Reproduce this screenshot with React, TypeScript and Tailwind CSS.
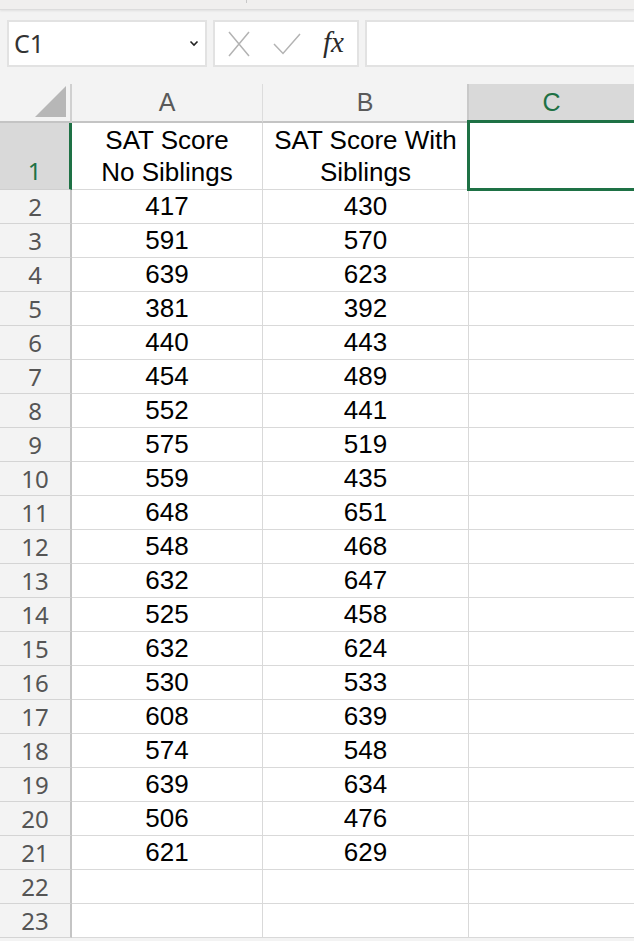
import React from "react";

const data: [string, string][] = [
  ["417", "430"],
  ["591", "570"],
  ["639", "623"],
  ["381", "392"],
  ["440", "443"],
  ["454", "489"],
  ["552", "441"],
  ["575", "519"],
  ["559", "435"],
  ["648", "651"],
  ["548", "468"],
  ["632", "647"],
  ["525", "458"],
  ["632", "624"],
  ["530", "533"],
  ["608", "639"],
  ["574", "548"],
  ["639", "634"],
  ["506", "476"],
  ["621", "629"],
  ["", ""],
  ["", ""],
];

const cellFont = { fontFamily: '"Liberation Sans", Arial, sans-serif' };
const uiFont = { fontFamily: '"Noto Sans", "Open Sans", sans-serif' };

export default function App() {
  return (
    <div className="w-[634px] h-[941px] overflow-hidden bg-[#f3f3f3] flex flex-col">
      {/* top strip */}
      <div className="h-[10px] bg-[#f0efee] border-b border-[#dcdcdc] shadow-[0_1px_2px_rgba(0,0,0,0.08)] flex justify-center">
        <div className="w-px h-[3px] bg-[#c8c8c8] ml-[-142px]" />
      </div>
      {/* formula bar */}
      <div className="h-[74px] flex items-start pt-[10px] pl-[7px] gap-[6px]">
        <div className="w-[200px] h-[47px] bg-white border-2 border-[#e2e2e2] flex items-center pl-[5px] pr-[5px]">
          <span className="text-[25px] text-[#333] flex-1 leading-none" style={uiFont}>
            C1
          </span>
          <svg width="10" height="7" viewBox="0 0 10 7" className="mr-[1px]">
            <path d="M1.5 1.5 L5 5 L8.5 1.5" stroke="#222" strokeWidth="1.6" fill="none" />
          </svg>
        </div>
        <div className="w-[146px] h-[47px] bg-white border-2 border-[#e2e2e2] flex items-center pl-[13px]">
          <svg width="22" height="26" viewBox="0 0 22 26">
            <path d="M1 1 L21 25 M21 1 L1 25" stroke="#b3b3b3" strokeWidth="1.5" fill="none" />
          </svg>
          <svg width="28" height="22" viewBox="0 0 28 22" className="ml-[23px]">
            <path d="M1 11 L10 20.5 L27 1" stroke="#b3b3b3" strokeWidth="1.5" fill="none" />
          </svg>
          <span
            className="ml-[22px] text-[29px] italic text-[#2a2a2a] leading-none mt-[-2px]"
            style={{ fontFamily: '"Liberation Serif", "Times New Roman", serif' }}
          >
            fx
          </span>
        </div>
        <div className="flex-1 h-[47px] bg-white border-2 border-r-0 border-[#e2e2e2]" />
      </div>
      {/* sheet */}
      <div className="grid grid-cols-[72px_191px_206px_1fr] grid-rows-[39px_67px_repeat(22,34px)]">
        {/* header row */}
        <div className="bg-[#f3f3f3] border-r-2 border-r-[#d0d0d0] border-b-2 border-b-[#c4c4c4] flex items-end justify-end pr-[4px] pb-[4px]">
          <svg width="31" height="31" viewBox="0 0 31 31">
            <path d="M31 0 L31 31 L0 31 Z" fill="#b7b7b7" />
          </svg>
        </div>
        <div
          className="bg-[#f3f3f3] border-r border-r-[#dcdcdc] border-b-2 border-b-[#c4c4c4] flex items-center justify-center text-[25px] text-[#5a5a5a]"
          style={cellFont}
        >
          A
        </div>
        <div
          className="bg-[#f3f3f3] border-r-2 border-r-[#c9c9c9] border-b-2 border-b-[#c4c4c4] flex items-center justify-center text-[25px] text-[#5a5a5a]"
          style={cellFont}
        >
          B
        </div>
        <div
          className="bg-[#d9d9d9] border-b-2 border-b-[#1e7145] flex items-center justify-center text-[25px] text-[#1e7145]"
          style={cellFont}
        >
          C
        </div>

        {/* row 1 */}
        <div
          className="bg-[#d9d9d9] border-r-[3px] border-r-[#1e7145] border-b border-b-[#cfcfcf] flex items-end justify-center pb-[0px] text-[24px] text-[#1e7145]"
          style={uiFont}
        >
          1
        </div>
        <div
          className="bg-white border-r border-r-[#d9d9d9] border-b border-b-[#d9d9d9] flex items-center justify-center text-center text-[26px] leading-[32px] text-black"
          style={cellFont}
        >
          SAT Score
          <br />
          No Siblings
        </div>
        <div
          className="bg-white border-r border-r-[#d9d9d9] border-b border-b-[#d9d9d9] flex items-center justify-center text-center text-[26px] leading-[32px] text-black"
          style={cellFont}
        >
          SAT Score With
          <br />
          Siblings
        </div>
        <div className="bg-white relative">
          <div className="absolute left-[-2px] top-[-3px] right-[-4px] bottom-[-1px] border-[3px] border-[#1e7145]" />
        </div>

        {data.map(([a, b], i) => (
          <React.Fragment key={i}>
            <div
              className="bg-[#f3f3f3] border-r-2 border-r-[#c4c4c4] border-b border-b-[#d4d4d4] flex items-center justify-center text-[24px] text-[#555]"
              style={uiFont}
            >
              {i + 2}
            </div>
            <div
              className="bg-white border-r border-r-[#d9d9d9] border-b border-b-[#d9d9d9] flex items-center justify-center text-[26px] text-black"
              style={cellFont}
            >
              {a}
            </div>
            <div
              className="bg-white border-r border-r-[#d9d9d9] border-b border-b-[#d9d9d9] flex items-center justify-center text-[26px] text-black"
              style={cellFont}
            >
              {b}
            </div>
            <div className="bg-white border-b border-b-[#d9d9d9]" />
          </React.Fragment>
        ))}
      </div>
    </div>
  );
}
